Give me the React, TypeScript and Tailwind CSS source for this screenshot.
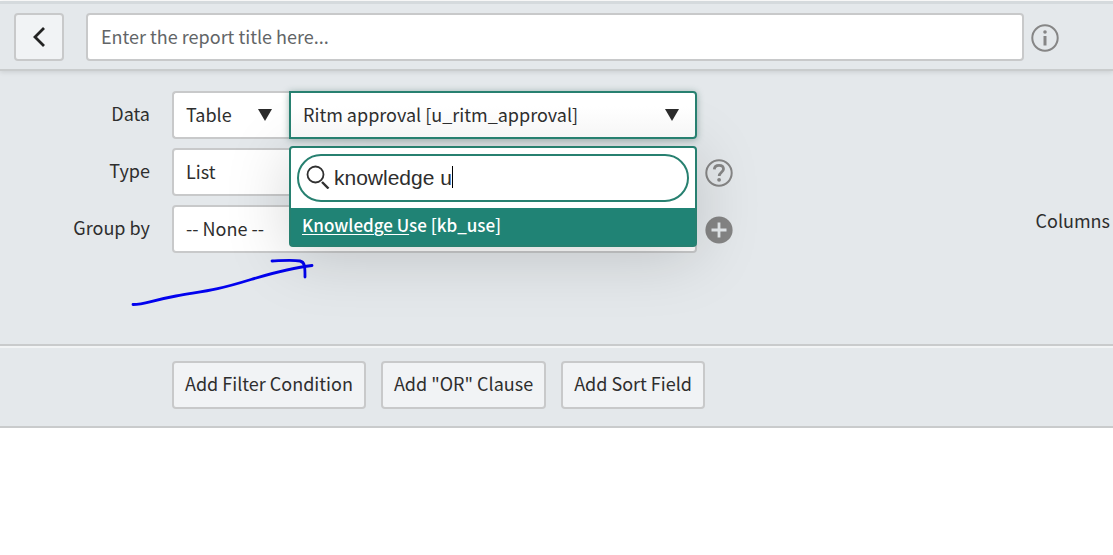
import { useState, type ReactNode } from "react";

const fieldBase =
  "h-12 min-w-0 appearance-none border-2 px-3 pb-0.5 text-lg leading-6 text-[#2e2e2e] outline-none";

function Caret() {
  return (
    <svg viewBox="0 0 14 12" className="h-3 w-3.5 fill-[#2b2b2b]" aria-hidden="true">
      <path d="M0 0h14L7 12z" />
    </svg>
  );
}

function Row({ label, htmlFor, children, action }: { label: string; htmlFor: string; children: ReactNode; action?: ReactNode }) {
  return (
    <div className="flex">
      <label htmlFor={htmlFor} className="w-[150px] shrink-0 pt-2.5 text-right leading-6">
        {label}
      </label>
      <div className="ml-[22px] flex w-[525px] max-w-full">{children}</div>
      {action && <div className="ml-2 flex items-center pt-0.5">{action}</div>}
    </div>
  );
}

function FormButton({ children }: { children: ReactNode }) {
  return (
    <button type="button" className="h-12 rounded border-2 border-[#c8c9ca] bg-[#f1f3f5] px-[11px] pb-1 leading-6">
      {children}
    </button>
  );
}

export default function App() {
  const [title, setTitle] = useState("");
  const [query, setQuery] = useState("knowledge u");

  return (
    <main className="overflow-hidden bg-white pt-px font-['Noto_Sans_CJK_SC',sans-serif] text-lg leading-6 text-[#2e2e2e]">
      <header className="relative z-10 flex items-center border-t-3 border-b-2 border-t-[#d5dadd] border-b-[#c9cccd] bg-[#e4e8eb] pt-[9px] pr-[54px] pb-2 pl-3.5 shadow-[0_1px_5px_rgba(0,0,0,0.12)]">
        <button
          type="button"
          aria-label="Back"
          className="flex h-12 w-[50px] items-center justify-center rounded border-2 border-[#c8c9ca] bg-[#f1f3f5]"
        >
          <svg viewBox="0 0 12 20" className="h-5 w-3" fill="none" stroke="#222" strokeWidth="2.8" aria-hidden="true">
            <path d="M11 1 2 10l9 9" />
          </svg>
        </button>
        <input
          type="text"
          aria-label="Report title"
          placeholder="Enter the report title here..."
          value={title}
          onChange={(e) => setTitle(e.target.value)}
          className="ml-[22px] h-12 min-w-0 flex-1 rounded border-2 border-[#c8c9ca] bg-white px-[13px] pb-0.5 text-lg leading-6 outline-none placeholder:text-[#626567]"
        />
        <button type="button" aria-label="Report information" className="ml-[7px] pt-0.5">
          <svg viewBox="0 0 28 28" className="h-7 w-7" fill="none" stroke="#868686" aria-hidden="true">
            <circle cx="14" cy="14" r="12.7" strokeWidth="2" />
            <path d="M14 12v9.5" strokeWidth="3" />
            <circle cx="14" cy="8" r="1.8" fill="#868686" stroke="none" />
          </svg>
        </button>
      </header>

      <section className="relative flex justify-between border-b-2 border-[#c9cbcc] bg-[#e4e8eb] pt-5 pr-[3px] pb-[91px]">
        <div className="flex flex-col gap-[9px]">
          <Row label="Data" htmlFor="source-type">
            <div className="relative flex w-[117px] items-center">
              <select id="source-type" className={`${fieldBase} w-full rounded-l border-r-0 border-[#c8c9ca] bg-white`}>
                <option>Table</option>
              </select>
              <span className="pointer-events-none absolute right-[17px]">
                <Caret />
              </span>
            </div>
            <div className="relative z-10 flex flex-1 items-center">
              <select
                aria-label="Source table"
                className={`${fieldBase} relative z-10 w-full rounded-r border-[#278070] bg-linear-to-b from-white from-30% to-[#f6f6f6] shadow-[0_1px_7px_rgba(31,80,70,0.4)]`}
              >
                <option>Ritm approval [u_ritm_approval]</option>
              </select>
              <span className="pointer-events-none absolute right-[18px] z-20">
                <Caret />
              </span>
              <div className="absolute top-[55px] right-0 left-0 rounded border-2 border-[#278070] bg-white shadow-[0_8px_64px_rgba(0,0,0,0.17)]">
                <div className="relative p-1.5">
                  <input
                    type="text"
                    aria-label="Search tables"
                    value={query}
                    onChange={(e) => setQuery(e.target.value)}
                    className="h-12 w-full rounded-full border-2 border-[#278070] pr-4 pl-[35px] font-['Liberation_Sans',sans-serif] text-[21px] text-[#2e2e2e] outline-none"
                  />
                  <svg viewBox="0 0 24 24" className="absolute top-[17px] left-[15px] h-6 w-6" fill="none" stroke="#303030" aria-hidden="true">
                    <circle cx="9.5" cy="9.5" r="8" strokeWidth="1.8" />
                    <path d="m16 17 6.500 6.500" strokeWidth="2.4" />
                  </svg>
                  <span className="absolute top-[18px] left-[161px] h-[22px] w-px bg-black" />
                </div>
                <ul role="listbox" aria-label="Tables">
                  <li
                    role="option"
                    aria-selected="true"
                    className="bg-[#208375] px-[11px] pt-[5px] pb-2 text-[17px] font-medium text-white"
                  >
                    <span className="underline decoration-1 underline-offset-2">Knowledge U</span>se [kb_use]
                  </li>
                </ul>
              </div>
            </div>
          </Row>
          <Row
            label="Type"
            htmlFor="report-type"
            action={
              <button type="button" aria-label="Help with report type">
                <svg viewBox="0 0 28 28" className="h-7 w-7" fill="none" stroke="#868686" aria-hidden="true">
                  <circle cx="14" cy="14" r="12.7" strokeWidth="2" />
                  <path d="M9.300 10.300C9.500 7.500 11.400 6.300 14 6.300s4.500 1.400 4.500 3.800c0 3.100-4.300 3.300-4.300 7" strokeWidth="2.8" />
                  <circle cx="14.1" cy="20.8" r="1.9" fill="#868686" stroke="none" />
                </svg>
              </button>
            }
          >
            <select id="report-type" className={`${fieldBase} w-full rounded border-[#c8c9ca] bg-white`}>
              <option>List</option>
            </select>
          </Row>
          <Row
            label="Group by"
            htmlFor="group-by"
            action={
              <button type="button" aria-label="Add group by">
                <svg viewBox="0 0 28 28" className="h-7 w-7" fill="none" aria-hidden="true">
                  <circle cx="14" cy="14" r="13.6" fill="#858585" />
                  <path d="M14 6.5v15M6.5 14h15" stroke="#e4e8eb" strokeWidth="2.8" />
                </svg>
              </button>
            }
          >
            <select id="group-by" className={`${fieldBase} w-full rounded border-[#c8c9ca] bg-white`}>
              <option>-- None --</option>
            </select>
          </Row>
        </div>
        <span className="mt-[117px] leading-6">Columns</span>
        <svg
          viewBox="0 0 184 50"
          className="pointer-events-none absolute top-[186px] left-[130px] h-[50px] w-[184px]"
          fill="none"
          stroke="#0202ee"
          strokeWidth="2.8"
          strokeLinecap="round"
          strokeLinejoin="round"
          aria-hidden="true"
        >
          <path d="M3 47.5c12 0 16-3.5 43-8.5C74 34 84 34 121 22.5c25-7.5 42-12 61-14" />
          <path d="M142 4c11-.5 20-1.5 28 0 5 1 5 6 5 16" />
        </svg>
      </section>

      <section className="flex flex-wrap gap-[15px] border-t-2 border-b-2 border-t-[#f2f4f5] border-b-[#c9cbcc] bg-[#e4e8eb] pt-[13px] pb-[17px] pl-[172px]">
        <FormButton>Add Filter Condition</FormButton>
        <FormButton>Add "OR" Clause</FormButton>
        <FormButton>Add Sort Field</FormButton>
      </section>
    </main>
  );
}
